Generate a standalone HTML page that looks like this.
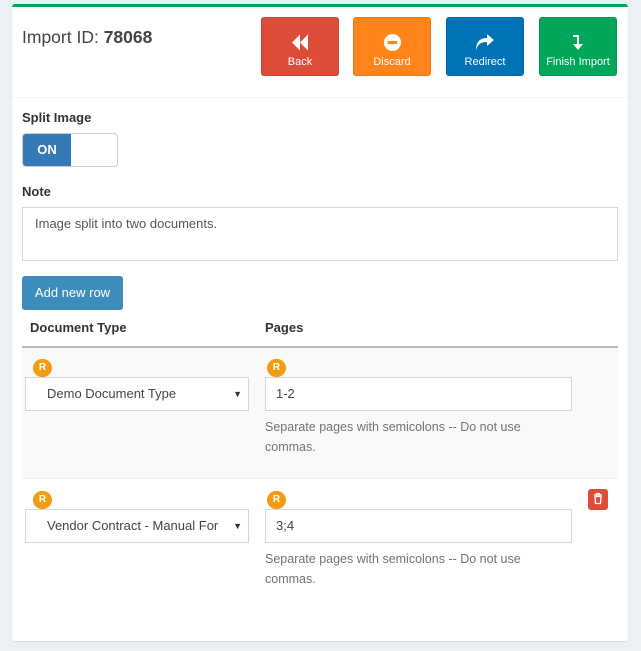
<!DOCTYPE html>
<html><head><style>
*{box-sizing:border-box;margin:0;padding:0}
body{width:641px;height:651px;background:#ecf0f5;font-family:"Liberation Sans",sans-serif;color:#333;position:relative;overflow:hidden}
.a{position:absolute}
.panel{left:12px;top:4px;width:616px;height:637px;background:#fff;border-top:3px solid #00a65a;border-radius:3px;box-shadow:0 1px 1px rgba(0,0,0,.1)}
.btn{position:absolute;top:17px;width:78px;height:59px;border-radius:3px;color:#fff;font-size:11px;text-align:center;border:1px solid rgba(0,0,0,.08)}
.btn svg{display:block;margin:16px auto 5px;height:17px}
.lbl{font-weight:bold;font-size:13px;color:#333}
.inp{border:1px solid #d2d6de;background:#fff;font-size:13px;color:#555}
.badge{width:19px;height:18px;border-radius:9px;background:#f39c12;color:#fff;font-size:10px;font-weight:bold;text-align:center;line-height:18px}
.help{font-size:12.5px;color:#737373;line-height:20px;width:300px}
.caret{position:absolute;right:6px;top:11px;font-size:9px;color:#333}
</style></head><body>
<div class="a panel"></div>
<div class="a" style="left:22px;top:27px;font-size:17.5px;color:#444">Import ID: <b>78068</b></div>
<div class="btn" style="left:261px;background:#dd4b39"><svg width="20" height="17" viewBox="0 0 20 17"><path d="M10 0.5v16L2 8.5zM18 0.5v16L10 8.5z" fill="#fff"/></svg>Back</div>
<div class="btn" style="left:353px;background:#ff851b"><svg width="17" height="17" viewBox="0 0 16 16"><circle cx="8" cy="8" r="8" fill="#fff"/><rect x="3.5" y="6.5" width="9" height="3" fill="#ff851b"/></svg>Discard</div>
<div class="btn" style="left:446px;background:#0073b7"><svg width="20" height="17" viewBox="0 0 20 17"><path d="M12 0l7 6-7 6V8C6 8 3 10 1 16 1 8 5 4 12 4z" fill="#fff"/></svg>Redirect</div>
<div class="btn" style="left:539px;background:#00a65a"><svg width="14" height="17" viewBox="0 0 14 17"><path d="M2 1h6v9h4l-5 6-5-6h4V3H2z" fill="#fff"/></svg>Finish Import</div>
<div class="a" style="left:12px;top:97px;width:616px;height:1px;background:#f0f0f0"></div>
<div class="a lbl" style="left:22px;top:110px">Split Image</div>
<div class="a" style="left:22px;top:133px;width:96px;height:34px;border:1px solid #ccc;border-radius:4px;overflow:hidden;background:#fff"><div style="width:48px;height:100%;background:#337ab7;color:#fff;font-size:13px;font-weight:bold;text-align:center;line-height:32px">ON</div></div>
<div class="a lbl" style="left:22px;top:184px">Note</div>
<div class="a inp" style="left:22px;top:207px;width:596px;height:54px;padding:8px 12px">Image split into two documents.</div>
<div class="a" style="left:22px;top:276px;width:101px;height:34px;background:#3c8dbc;border-radius:3px;color:#fff;font-size:13px;text-align:center;line-height:34px">Add new row</div>
<div class="a lbl" style="left:30px;top:320px">Document Type</div>
<div class="a lbl" style="left:265px;top:320px">Pages</div>
<div class="a" style="left:22px;top:346px;width:596px;height:2px;background:#bbb"></div>
<div class="a" style="left:22px;top:348px;width:596px;height:131px;background:#f9f9f9;border-bottom:1px solid #f0f0f0"></div>
<div class="a badge" style="left:33px;top:359px">R</div>
<div class="a badge" style="left:267px;top:359px">R</div>
<div class="a inp" style="left:25px;top:377px;width:224px;height:34px;padding:8px 21px;color:#444">Demo Document Type<span class="caret">▼</span></div>
<div class="a inp" style="left:265px;top:377px;width:307px;height:34px;padding:8px 10px;color:#444">1-2</div>
<div class="a help" style="left:265px;top:417px">Separate pages with semicolons -- Do not use commas.</div>
<div class="a badge" style="left:33px;top:491px">R</div>
<div class="a badge" style="left:267px;top:491px">R</div>
<div class="a" style="left:588px;top:489px;width:20px;height:21px;background:#dd4b39;border-radius:3px"><svg width="20" height="21" viewBox="0 0 20 21"><path d="M6 6h8M8.5 6V4.5h3V6M7 7.5h6l-.5 7h-5z" stroke="#fff" stroke-width="1.3" fill="none"/></svg></div>
<div class="a inp" style="left:25px;top:509px;width:224px;height:34px;padding:8px 21px;color:#444;white-space:nowrap;overflow:hidden">Vendor Contract - Manual For<span class="caret" style="background:#fff">▼</span></div>
<div class="a inp" style="left:265px;top:509px;width:307px;height:34px;padding:8px 10px;color:#444">3;4</div>
<div class="a help" style="left:265px;top:549px">Separate pages with semicolons -- Do not use commas.</div>
</body></html>
